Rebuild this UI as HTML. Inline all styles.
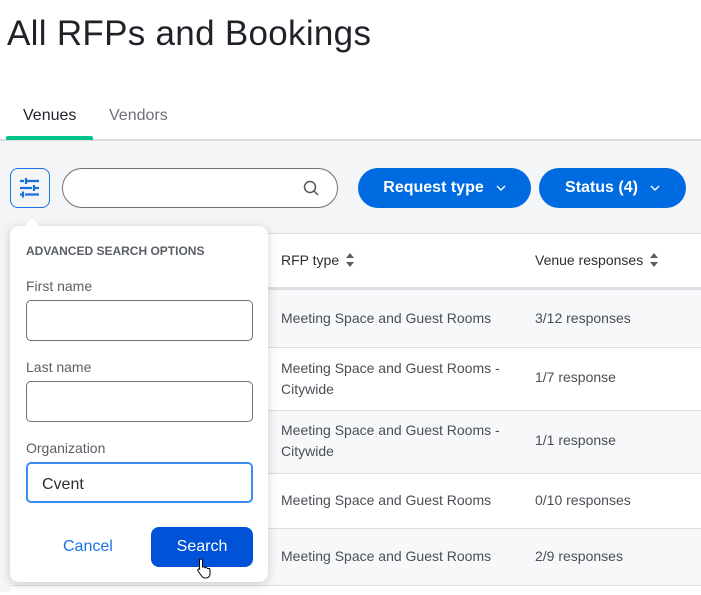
<!DOCTYPE html>
<html><head><style>
*{box-sizing:border-box;margin:0;padding:0}
body{width:701px;height:592px;overflow:hidden;background:#fff;font-family:"Liberation Sans",sans-serif;position:relative;color:#1f2329}
.abs{position:absolute}
h1{position:absolute;left:7px;top:14px;font-size:35px;font-weight:normal;color:#1f2329;letter-spacing:0.3px}
.tab{position:absolute;top:107px;font-size:16px}
.gray{position:absolute;left:0;top:139px;width:701px;height:453px;background:#f4f5f7;border-top:2px solid #dcdee1}
.pill{position:absolute;top:168px;height:40px;border-radius:20px;background:#006ae1;color:#fff;font-size:16px;font-weight:bold;display:flex;align-items:center;justify-content:center}
.pill svg{margin-left:12px}
.table{position:absolute;left:11px;top:233px;width:700px;height:360px;background:#fff;border-top:1px solid #dcdee1;border-left:1px solid #dcdee1}
.row{position:absolute;left:11px;width:690px;border-top:1px solid #dcdee1;font-size:14px;color:#4a4f55}
.row span{position:absolute}
.pop{position:absolute;left:10px;top:226px;width:258px;height:356px;background:#fff;border-radius:9px;box-shadow:0 2px 10px rgba(0,0,0,.18)}
.lbl{position:absolute;left:16px;font-size:14px;color:#5b6067}
.inp{position:absolute;left:16px;width:227px;height:41px;border:1px solid #6b7078;border-radius:5px;background:#fff}
</style></head><body>
<h1>All RFPs and Bookings</h1>
<div class="tab" style="left:23px;color:#1f2329">Venues</div>
<div class="tab" style="left:109px;color:#6b7078">Vendors</div>
<div class="gray"></div>
<div class="abs" style="left:6px;top:136px;width:87px;height:4px;background:#00c48c;border-radius:2px 2px 0 0"></div>
<div class="abs" style="left:10px;top:168px;width:40px;height:40px;border:1px solid #1a73e8;border-radius:8px;background:#f4f5f7">
<svg width="40" height="40" viewBox="0 0 40 40" style="position:absolute;left:-1px;top:-1px" stroke="#1a6fe0" stroke-width="2.2" fill="none"><path d="M10 13h4M17 13h12M16 10v6M10 20h12M25 20h4M24 17v6M10 26.5h3M15 26.5h14M13 23.5v6"/></svg></div>
<div class="abs" style="left:62px;top:168px;width:276px;height:40px;border:1px solid #6b7078;border-radius:20px;background:#fff">
<svg width="18" height="18" viewBox="0 0 18 18" style="position:absolute;left:239px;top:10px" stroke="#555" stroke-width="1.5" fill="none"><circle cx="8" cy="8" r="5.5"/><path d="M12 12l4 4"/></svg></div>
<div class="pill" style="left:358px;width:173px">Request type<svg width="10" height="6" viewBox="0 0 10 6"><path d="M1 1l4 4 4-4" stroke="#fff" stroke-width="1.4" fill="none"/></svg></div>
<div class="pill" style="left:539px;width:147px">Status (4)<svg width="10" height="6" viewBox="0 0 10 6"><path d="M1 1l4 4 4-4" stroke="#fff" stroke-width="1.4" fill="none"/></svg></div>
<div class="table"></div>
<div class="row" style="top:234px;height:55px;background:#fff;border-top:none;color:#2a2e33"><span style="left:270px;top:18px">RFP type <svg width="10" height="16" viewBox="0 0 10 16" style="vertical-align:-3px;margin-left:2px"><path d="M5 1l4 5H1zM5 15l4-5H1z" fill="#5b6067"/></svg></span><span style="left:524px;top:18px">Venue responses <svg width="10" height="16" viewBox="0 0 10 16" style="vertical-align:-3px;margin-left:2px"><path d="M5 1l4 5H1zM5 15l4-5H1z" fill="#5b6067"/></svg></span></div>
<div class="row" style="top:287px;height:60px;background:#f7f8f9;border-top:3px solid #dcdee1"><span style="left:270px;top:20px">Meeting Space and Guest Rooms</span><span style="left:524px;top:20px">3/12 responses</span></div>
<div class="row" style="top:347px;height:63px;background:#fff"><span style="left:270px;top:10px;line-height:21px">Meeting Space and Guest Rooms -<br>Citywide</span><span style="left:524px;top:21px">1/7 response</span></div>
<div class="row" style="top:410px;height:63px;background:#f7f8f9"><span style="left:270px;top:9px;line-height:21px">Meeting Space and Guest Rooms -<br>Citywide</span><span style="left:524px;top:21px">1/1 response</span></div>
<div class="row" style="top:473px;height:55px;background:#fff"><span style="left:270px;top:18px">Meeting Space and Guest Rooms</span><span style="left:524px;top:18px">0/10 responses</span></div>
<div class="row" style="top:528px;height:57px;background:#f7f8f9"><span style="left:270px;top:19px">Meeting Space and Guest Rooms</span><span style="left:524px;top:19px">2/9 responses</span></div>
<div class="row" style="top:585px;height:10px;background:#fff"></div>
<div class="pop">
<div class="abs" style="left:16px;top:-5px;width:12px;height:12px;background:#fff;transform:rotate(45deg)"></div>
<div class="lbl" style="top:18px;font-size:12px;font-weight:bold;color:#5b6067">ADVANCED SEARCH OPTIONS</div>
<div class="lbl" style="top:52px">First name</div>
<div class="inp" style="top:74px"></div>
<div class="lbl" style="top:133px">Last name</div>
<div class="inp" style="top:155px"></div>
<div class="lbl" style="top:214px">Organization</div>
<div class="inp" style="top:236px;border:2px solid #3a8ef0;font-size:16px;padding:12px 0 0 14px;color:#2a2e33">Cvent</div>
<div class="abs" style="left:53px;top:312px;font-size:16px;color:#1a73e8">Cancel</div>
<div class="abs" style="left:141px;top:301px;width:102px;height:40px;background:#0052d6;border-radius:8px;color:#fff;font-size:16px;text-align:center;line-height:40px">Search</div>
</div>
<svg class="abs" style="left:196px;top:557px" width="18" height="22" viewBox="0 0 18 22"><path d="M5 2c1 0 1.5.6 1.5 1.5V10l1-.3c.8 0 1.3.5 1.5 1l1-.2c.8 0 1.2.5 1.4 1l1-.1c1 0 1.6.7 1.6 1.6V17c0 2-1.5 4-4 4H9c-1.5 0-2.5-.8-3.4-2L2 14c-.5-.7-.3-1.4.3-1.8.6-.4 1.3-.2 1.7.3L3.5 12V3.5C3.5 2.6 4 2 5 2z" fill="#fff" stroke="#000" stroke-width="1"/></svg>
</body></html>
